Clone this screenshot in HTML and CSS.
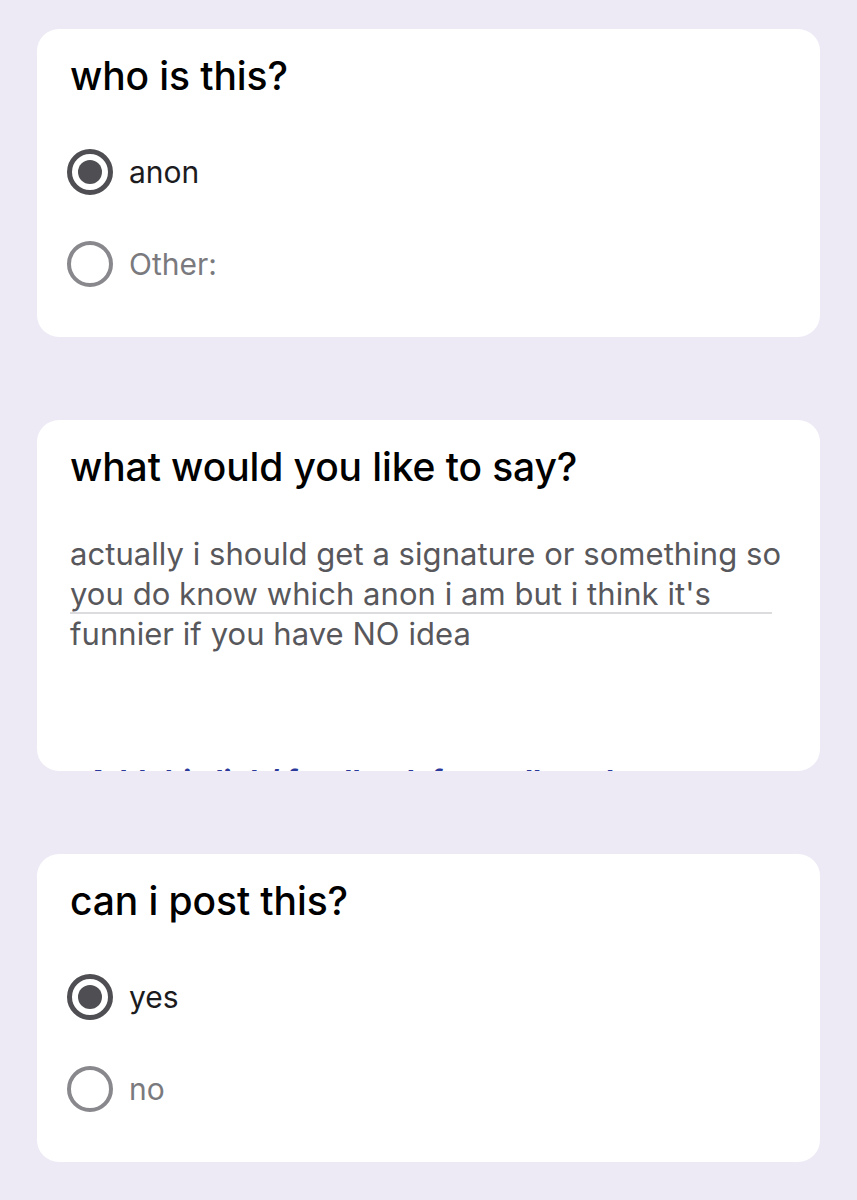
FILE: index.html
```html
<!DOCTYPE html>
<html>
<head>
<meta charset="utf-8">
<link rel="stylesheet" href="styles.css">
</head>
<body>
<main class="page">
  <section class="card card-radio">
    <h2 class="title">who is this?</h2>
    <div class="options">
      <div class="option checked"><span class="radio"></span><span class="label">anon</span></div>
      <div class="option"><span class="radio"></span><span class="label">Other:</span></div>
    </div>
  </section>

  <section class="card card-text">
    <h2 class="title">what would you like to say?</h2>
    <div class="answer">
      <p class="answer-text">actually i should get a signature or something so you do know which anon i am but i think it's funnier if you have NO idea</p>
      <span class="answer-line"></span>
    </div>
    <div class="link">Add this link/ feedback from all ready</div>
  </section>

  <section class="card card-radio">
    <h2 class="title">can i post this?</h2>
    <div class="options">
      <div class="option checked"><span class="radio"></span><span class="label">yes</span></div>
      <div class="option"><span class="radio"></span><span class="label">no</span></div>
    </div>
  </section>
</main>
</body>
</html>
```

FILE: styles.css
```css
html, body {
  margin: 0;
  padding: 0;
  background: #edeaf6;
}
body {
  font-family: Inter, "Liberation Sans", sans-serif;
  -webkit-font-smoothing: antialiased;
}
.page {
  display: flex;
  flex-direction: column;
  gap: 83px;
  padding: 29px 37px;
}
.card {
  background: #ffffff;
  border-radius: 22px;
  padding: 0 33px 0 30px;
  box-sizing: border-box;
  overflow: hidden;
  position: relative;
}
.card-radio {
  height: 308px;
}
.card-text {
  height: 351px;
}
.title {
  margin: 0 0 0 3px;
  font-size: 39px;
  font-weight: 500;
  letter-spacing: -0.1px;
  color: #000;
  line-height: 46px;
  padding-top: 24px;
}
.options {
  display: flex;
  flex-direction: column;
  gap: 46px;
  margin-top: 50px;
}
.option {
  display: flex;
  align-items: center;
  gap: 16px;
  height: 46px;
}
.radio {
  width: 46px;
  height: 46px;
  box-sizing: border-box;
  border-radius: 50%;
  border: 4px solid #88888d;
  flex: none;
  display: flex;
  align-items: center;
  justify-content: center;
}
.option.checked .radio {
  border: 5px solid #4f4f53;
}
.option.checked .radio::after {
  content: "";
  width: 24px;
  height: 24px;
  border-radius: 50%;
  background: #4f4f53;
}
.label {
  font-size: 30px;
  color: #7a7a7e;
}
.option.checked .label {
  color: #1c1c1e;
}
.answer {
  position: relative;
  margin: 44px 0 0 3px;
  width: 717px;
}
.answer-text {
  margin: 0;
  font-size: 31px;
  line-height: 40px;
  letter-spacing: 0.05px;
  color: #58585c;
}
.answer-line {
  position: absolute;
  left: 0;
  width: 702px;
  top: 78px;
  height: 2px;
  background: #dcdcdf;
}
.link {
  position: absolute;
  left: 50px;
  top: 343px;
  font-size: 30px;
  font-weight: 700;
  color: #2b3a9a;
  white-space: nowrap;
}
```
